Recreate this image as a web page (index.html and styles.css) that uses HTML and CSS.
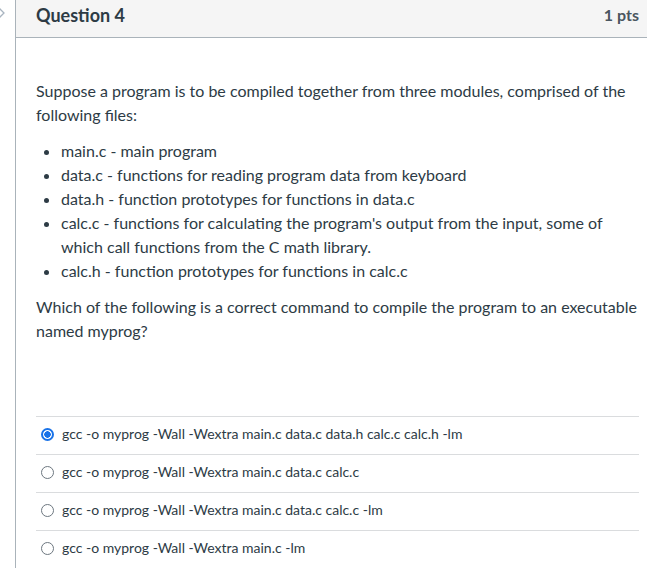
FILE: index.html
```html
<!DOCTYPE html>
<html lang="en">
<head>
  <meta charset="UTF-8" />
  <title>Question 4</title>
  <link rel="stylesheet" href="styles.css">
</head>
<body>
  <div class="page">
    <div class="gutter">
      <svg width="15" height="26" viewBox="0 0 15 26">
        <polyline points="-3,6 4,13 -3,20" fill="none" stroke="#a8b4c0" stroke-width="1.3"/>
      </svg>
    </div>

    <div class="question">
      <div class="header">
        <span class="title">Question 4</span>
        <span class="points">1 pts</span>
      </div>

      <div class="content">
        <p>Suppose a program is to be compiled together from three modules, comprised of the following files:</p>
        <ul>
          <li>main.c - main program</li>
          <li>data.c - functions for reading program data from keyboard</li>
          <li>data.h - function prototypes for functions in data.c</li>
          <li>calc.c - functions for calculating the program's output from the input, some of which call functions from the C math library.</li>
          <li>calc.h - function prototypes for functions in calc.c</li>
        </ul>
        <p>Which of the following is a correct command to compile the program to an executable named myprog?</p>

        <div class="answers">
          <label class="answer"><span class="radio checked"></span>gcc -o myprog -Wall -Wextra main.c data.c data.h calc.c calc.h -lm</label>
          <label class="answer"><span class="radio"></span>gcc -o myprog -Wall -Wextra main.c data.c calc.c</label>
          <label class="answer"><span class="radio"></span>gcc -o myprog -Wall -Wextra main.c data.c calc.c -lm</label>
          <label class="answer"><span class="radio"></span>gcc -o myprog -Wall -Wextra main.c -lm</label>
        </div>
      </div>
    </div>
  </div>
</body>
</html>
```

FILE: styles.css
```css
body {
  margin: 0;
  background-color: #fff;
  font-family: Lato, "Open Sans", sans-serif;
  color: #2d3b45;
}
.page {
  display: flex;
}
.gutter {
  width: 15px;
  flex-shrink: 0;
}
.gutter svg {
  display: block;
}
.question {
  flex: 1;
  border-left: 1px solid #aab3ba;
  min-height: 568px;
}
.header {
  display: flex;
  justify-content: space-between;
  align-items: center;
  height: 38px;
  padding: 0 8px 8px 20px;
  box-sizing: border-box;
  background-color: #f5f5f5;
  border-bottom: 1px solid #aab3ba;
}
.title {
  font-size: 18px;
  font-weight: bold;
}
.points {
  font-size: 16px;
  font-weight: bold;
  color: #4a5660;
}
.content {
  padding: 41px 8px 0 20px;
  font-size: 16px;
  line-height: 24px;
}
p {
  margin: 0 0 12px 0;
}
ul {
  margin: 0 0 12px 0;
  padding-left: 25px;
}
.answers {
  margin-top: 73px;
}
.answer {
  display: flex;
  align-items: center;
  height: 38px;
  box-sizing: border-box;
  padding: 0 0 3px 5px;
  border-top: 1px solid #dadcde;
  font-size: 14px;
}
.radio {
  width: 13px;
  height: 13px;
  box-sizing: border-box;
  border: 1px solid #6d7780;
  border-radius: 50%;
  margin-right: 8px;
  flex-shrink: 0;
}
.radio.checked {
  border: 2px solid #1a73e8;
  background: radial-gradient(circle, #1a73e8 0 3px, #fff 3.5px);
}
```
